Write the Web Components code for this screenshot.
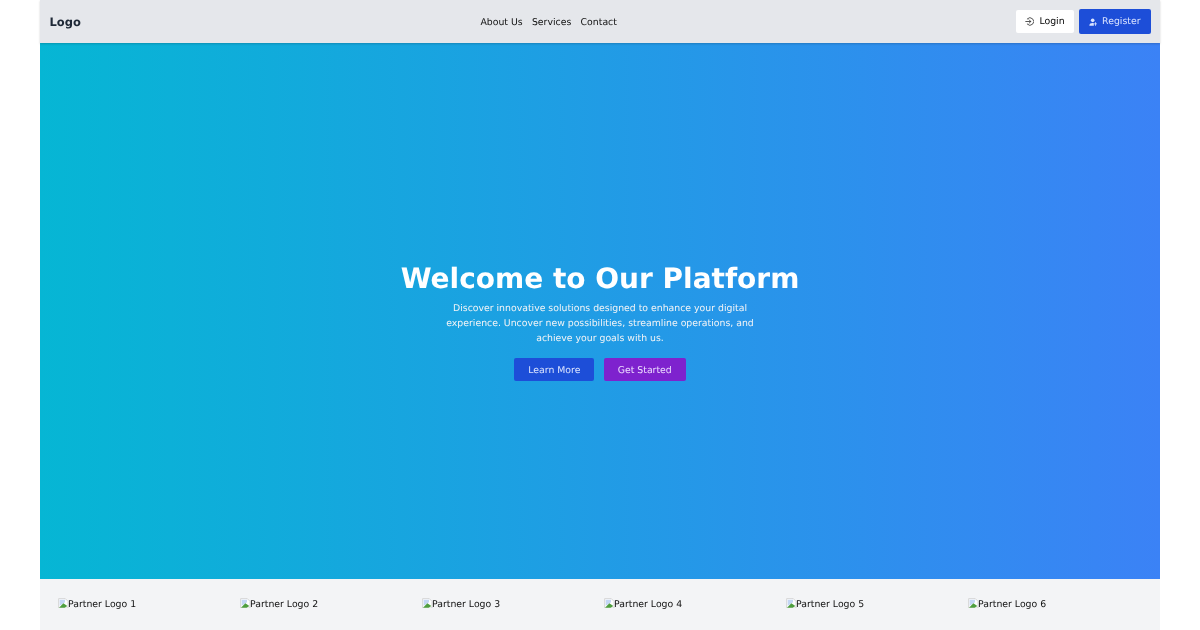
<!DOCTYPE html>
<html lang="en">
<head>
<meta charset="utf-8">
<title>Platform</title>
<style>
  html, body { margin: 0; height: 100%; background: #fff; }
  body { font-family: "DejaVu Sans", sans-serif; color: #000; overflow: hidden; text-rendering: geometricPrecision; }
  #page { width: 1120px; height: 630px; margin: 0 auto; display: flex; flex-direction: column; }
</style>
</head>
<body>
<div id="page">
  <site-header></site-header>
  <hero-banner></hero-banner>
  <partner-strip></partner-strip>
</div>

<script>
class UiButton extends HTMLElement {
  connectedCallback() {
    this.attachShadow({ mode: 'open' }).innerHTML = `
      <style>
        :host { display: inline-flex; align-items: center; justify-content: center; gap: 5px; box-sizing: border-box;
          height: var(--btn-h, 23px); padding: var(--btn-top, 1px) var(--btn-pad, 10px) 0; border-radius: 2px;
          font-size: 9.33px; line-height: 1; white-space: nowrap; }
        :host([kind="white"]) { background: #fff; color: #000; }
        :host([kind="blue"]) { background: #1d4ed8; color: #dbe4ff; }
        :host([kind="purple"]) { background: #7e22ce; color: #ecdcff; }
        ::slotted(svg) { display: block; flex: none; margin-top: -1px; }
        span { filter: blur(.25px); }
      </style>
      <slot name="icon"></slot><span><slot></slot></span>`;
  }
}

class SiteHeader extends HTMLElement {
  connectedCallback() {
    this.attachShadow({ mode: 'open' }).innerHTML = `
      <style>
        :host { display: flex; justify-content: space-between; align-items: center; flex: none; box-sizing: border-box;
          height: 43px; padding: 0 9px 0 9.500px; background: #e5e7eb; position: relative; z-index: 1;
          box-shadow: 0 1px 2px rgba(0,0,0,.18); }
        .logo { font-size: 11.5px; font-weight: 700; color: #1f2937; filter: blur(.25px); }
        nav { display: flex; gap: 9.33px; font-size: 9.33px; color: #111; padding-top: 1px; filter: blur(.25px); }
        .actions { display: flex; gap: 5px; align-items: center; }
      </style>
      <div class="logo">Logo</div>
      <nav><span>About Us</span><span>Services</span><span>Contact</span></nav>
      <div class="actions">
        <ui-button kind="white" style="--btn-pad:9px">
          <svg slot="icon" width="9" height="9" viewBox="0 0 24 24" fill="none" stroke="#333" stroke-width="2.200" stroke-linecap="round" stroke-linejoin="round"><path d="M6 5a10 10 0 1 1 0 14"/><path d="M2 12h13M11 7.500l4.500 4.500-4.500 4.500"/></svg>
          Login
        </ui-button>
        <ui-button kind="blue" style="--btn-h:25px;--btn-pad:10.500px">
          <svg slot="icon" width="8" height="8" viewBox="0 0 24 24" fill="#dbe4ff"><circle cx="11" cy="7" r="5.500"/><path d="M1 23c0-6 4-8 10-8 1.500 0 2.500.2 3.500.5V23z"/><path d="M18 13h2.500v3.500H24V19h-3.500v4H18v-4h-3v-2.500h3z"/></svg>
          Register
        </ui-button>
      </div>`;
  }
}

class HeroBanner extends HTMLElement {
  connectedCallback() {
    this.attachShadow({ mode: 'open' }).innerHTML = `
      <style>
        :host { display: flex; flex-direction: column; align-items: center; justify-content: center; flex: 1; min-height: 0;
          box-sizing: border-box; padding-top: 19px;
          background: linear-gradient(to right, #06b6d4, #3b82f6); color: #fff; text-align: center; }
        h1 { margin: 0 0 4px; font-size: 28px; line-height: 36px; font-weight: 700; filter: blur(.25px); }
        p { margin: 0 0 12px; width: 336px; font-size: 9.33px; line-height: 15px; color: #f3f4f6; filter: blur(.25px); }
        .cta { display: flex; gap: 9.33px; }
        ui-button { --btn-pad: 14px; --btn-top: 3px; }
      </style>
      <h1>Welcome to Our Platform</h1>
      <p>Discover innovative solutions designed to enhance your digital experience. Uncover new possibilities, streamline operations, and achieve your goals with us.</p>
      <div class="cta">
        <ui-button kind="blue">Learn More</ui-button>
        <ui-button kind="purple">Get Started</ui-button>
      </div>`;
  }
}

class PartnerLogo extends HTMLElement {
  connectedCallback() {
    this.attachShadow({ mode: 'open' }).innerHTML = `
      <style>
        :host { display: flex; align-items: center; font-size: 9.33px; color: #111; }
        svg { display: block; flex: none; margin-top: -3px; }
        span { filter: blur(.25px); margin-left: -.67px; }
      </style>
      <svg width="10.67" height="10.67" viewBox="0 0 16 16">
        <path d="M1 1h10l4 4v10H1z" fill="#fff" stroke="#c4c4c4"/>
        <path d="M2.500 2.500h8v4l-8 5z" fill="#c3d6f5"/>
        <path d="M1.500 14.500 8 8l6 4-4 2.500z" fill="#4e9e3f"/>
      </svg>
      <span><slot></slot></span>`;
  }
}

class PartnerStrip extends HTMLElement {
  connectedCallback() {
    const items = [1, 2, 3, 4, 5, 6].map(n => `<partner-logo>Partner Logo ${n}</partner-logo>`).join('');
    this.attachShadow({ mode: 'open' }).innerHTML = `
      <style>
        :host { display: grid; grid-template-columns: repeat(6, 182px); align-items: center; flex: none; box-sizing: border-box;
          height: 51px; padding: 0 0 0 18px; background: #f3f4f6; }
      </style>
      ${items}`;
  }
}

customElements.define('ui-button', UiButton);
customElements.define('site-header', SiteHeader);
customElements.define('hero-banner', HeroBanner);
customElements.define('partner-logo', PartnerLogo);
customElements.define('partner-strip', PartnerStrip);
</script>
</body>
</html>
